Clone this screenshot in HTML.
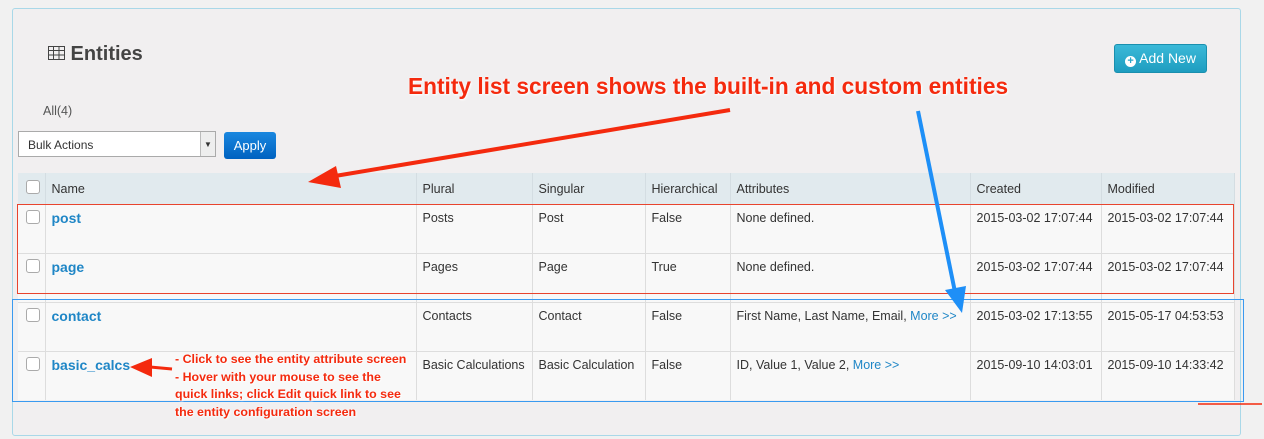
<!DOCTYPE html>
<html><head><meta charset="utf-8"><style>
body{margin:0;width:1264px;height:439px;background:#f1f1f1;font-family:"Liberation Sans",sans-serif;position:relative;overflow:hidden}
.panel{position:absolute;left:12px;top:8px;width:1227px;height:426px;border:1px solid #a9d8e8;border-radius:3px;background:#f1eff0}
.abs{position:absolute}
table{position:absolute;left:18px;top:173px;border-collapse:collapse;width:1216px;font-size:12.5px;color:#333;table-layout:fixed}
th{background:#e1eaee;height:31px;text-align:left;font-weight:normal;padding:2px 6px 0;border-right:1px solid #d4dde2;font-size:12.5px;box-sizing:border-box}
td{height:49px;vertical-align:top;padding:6px 6px 0;border-right:1px solid #ddd;border-top:1px solid #ddd;background:#f8f8f8;box-sizing:border-box}
.cb{width:12px;height:12px;border:1px solid #aaa;border-radius:3px;background:#fff;display:inline-block;margin-left:1px}
a{color:#1f86c6;text-decoration:none}
.nm{font-size:14px;font-weight:bold;color:#1f86c6;position:relative;top:-1px}
.ann{color:#f42a0e;font-weight:bold;text-shadow:0 0 2px #fff,1px 1px 2px #fff}
</style></head><body>
<div class="panel"></div>
<div class="abs" style="left:48px;top:43px;font-size:20px;color:#444;font-weight:bold">
<svg width="17" height="14" style="vertical-align:0"><rect x="0.5" y="0.5" width="16" height="13" fill="none" stroke="#444"/><path d="M0 4.5H17M0 9H17M5.5 0V14M11 0V14" stroke="#444"/></svg> Entities</div>
<div class="abs" style="left:1114px;top:44px;width:91px;height:27px;background:linear-gradient(#3bb9d8,#1e9dc0);border:1px solid #1a8fae;border-radius:3px;color:#fff;font-size:14px;line-height:27px;text-align:center"><span style="display:inline-block;width:11px;height:11px;border-radius:50%;background:#fff;color:#2aa7c9;font-size:11px;line-height:11px;font-weight:bold;vertical-align:-1px">+</span> Add New</div>
<div class="abs" style="left:43px;top:104px;font-size:12.5px;color:#555">All(4)</div>
<div class="abs" style="left:18px;top:131px;width:198px;height:26px;border:1px solid #aaa;background:#fff;font-size:12px;line-height:26px;box-sizing:border-box;padding-left:9px;color:#333">Bulk Actions<div class="abs" style="right:0;top:0;width:14px;height:24px;background:#eee;border-left:1px solid #bbb;font-size:8px;text-align:center">▼</div></div>
<div class="abs" style="left:224px;top:132px;width:52px;height:27px;background:linear-gradient(#1a87df,#0062c0);border-radius:3px;color:#fff;font-size:13px;line-height:27px;text-align:center">Apply</div>
<table>
<colgroup><col style="width:27px"><col style="width:371px"><col style="width:116px"><col style="width:113px"><col style="width:85px"><col style="width:240px"><col style="width:131px"><col style="width:133px"></colgroup>
<tr><th style="padding:0 7px"><span class="cb"></span></th><th>Name</th><th>Plural</th><th>Singular</th><th>Hierarchical</th><th>Attributes</th><th>Created</th><th>Modified</th></tr>
<tr><td style="padding:5px 7px"><span class="cb"></span></td><td><span class="nm">post</span></td><td>Posts</td><td>Post</td><td>False</td><td>None defined.</td><td>2015-03-02 17:07:44</td><td>2015-03-02 17:07:44</td></tr>
<tr><td style="padding:5px 7px"><span class="cb"></span></td><td><span class="nm">page</span></td><td>Pages</td><td>Page</td><td>True</td><td>None defined.</td><td>2015-03-02 17:07:44</td><td>2015-03-02 17:07:44</td></tr>
<tr><td style="padding:5px 7px"><span class="cb"></span></td><td><span class="nm">contact</span></td><td>Contacts</td><td>Contact</td><td>False</td><td>First Name, Last Name, Email, <a>More &gt;&gt;</a></td><td>2015-03-02 17:13:55</td><td>2015-05-17 04:53:53</td></tr>
<tr><td style="padding:5px 7px"><span class="cb"></span></td><td><span class="nm">basic_calcs</span></td><td>Basic Calculations</td><td>Basic Calculation</td><td>False</td><td>ID, Value 1, Value 2, <a>More &gt;&gt;</a></td><td>2015-09-10 14:03:01</td><td>2015-09-10 14:33:42</td></tr>
</table>
<div class="abs" style="left:17px;top:204px;width:1215px;height:88px;border:1px solid #e8442e"></div>
<div class="abs" style="left:12px;top:299px;width:1230px;height:101px;border:1px solid #3a9af0"></div>
<div class="abs ann" style="left:408px;top:73px;font-size:22.7px">Entity list screen shows the built-in and custom entities</div>
<div class="abs ann" style="left:175px;top:351px;font-size:12.4px;line-height:17.5px">- Click to see the entity attribute screen<br>- Hover with your mouse to see the<br>quick links; click Edit quick link to see<br>the entity configuration screen</div>
<svg class="abs" style="left:0;top:0" width="1264" height="439">
<path d="M730 110 L335 176" stroke="#f42a0e" stroke-width="4"/>
<path d="M308 182 L336 166 L341 188 Z" fill="#f42a0e"/>
<path d="M918 111 L955 292" stroke="#1e8ff7" stroke-width="4"/>
<path d="M962 313 L945 290 L966 286 Z" fill="#1e8ff7"/>
<path d="M172 369 L150 367" stroke="#f42a0e" stroke-width="3"/>
<path d="M130 367 L152 358 L152 377 Z" fill="#f42a0e"/>
<path d="M1198 404 H1262" stroke="#f42a0e" stroke-width="1.5"/>
</svg>
</body></html>
